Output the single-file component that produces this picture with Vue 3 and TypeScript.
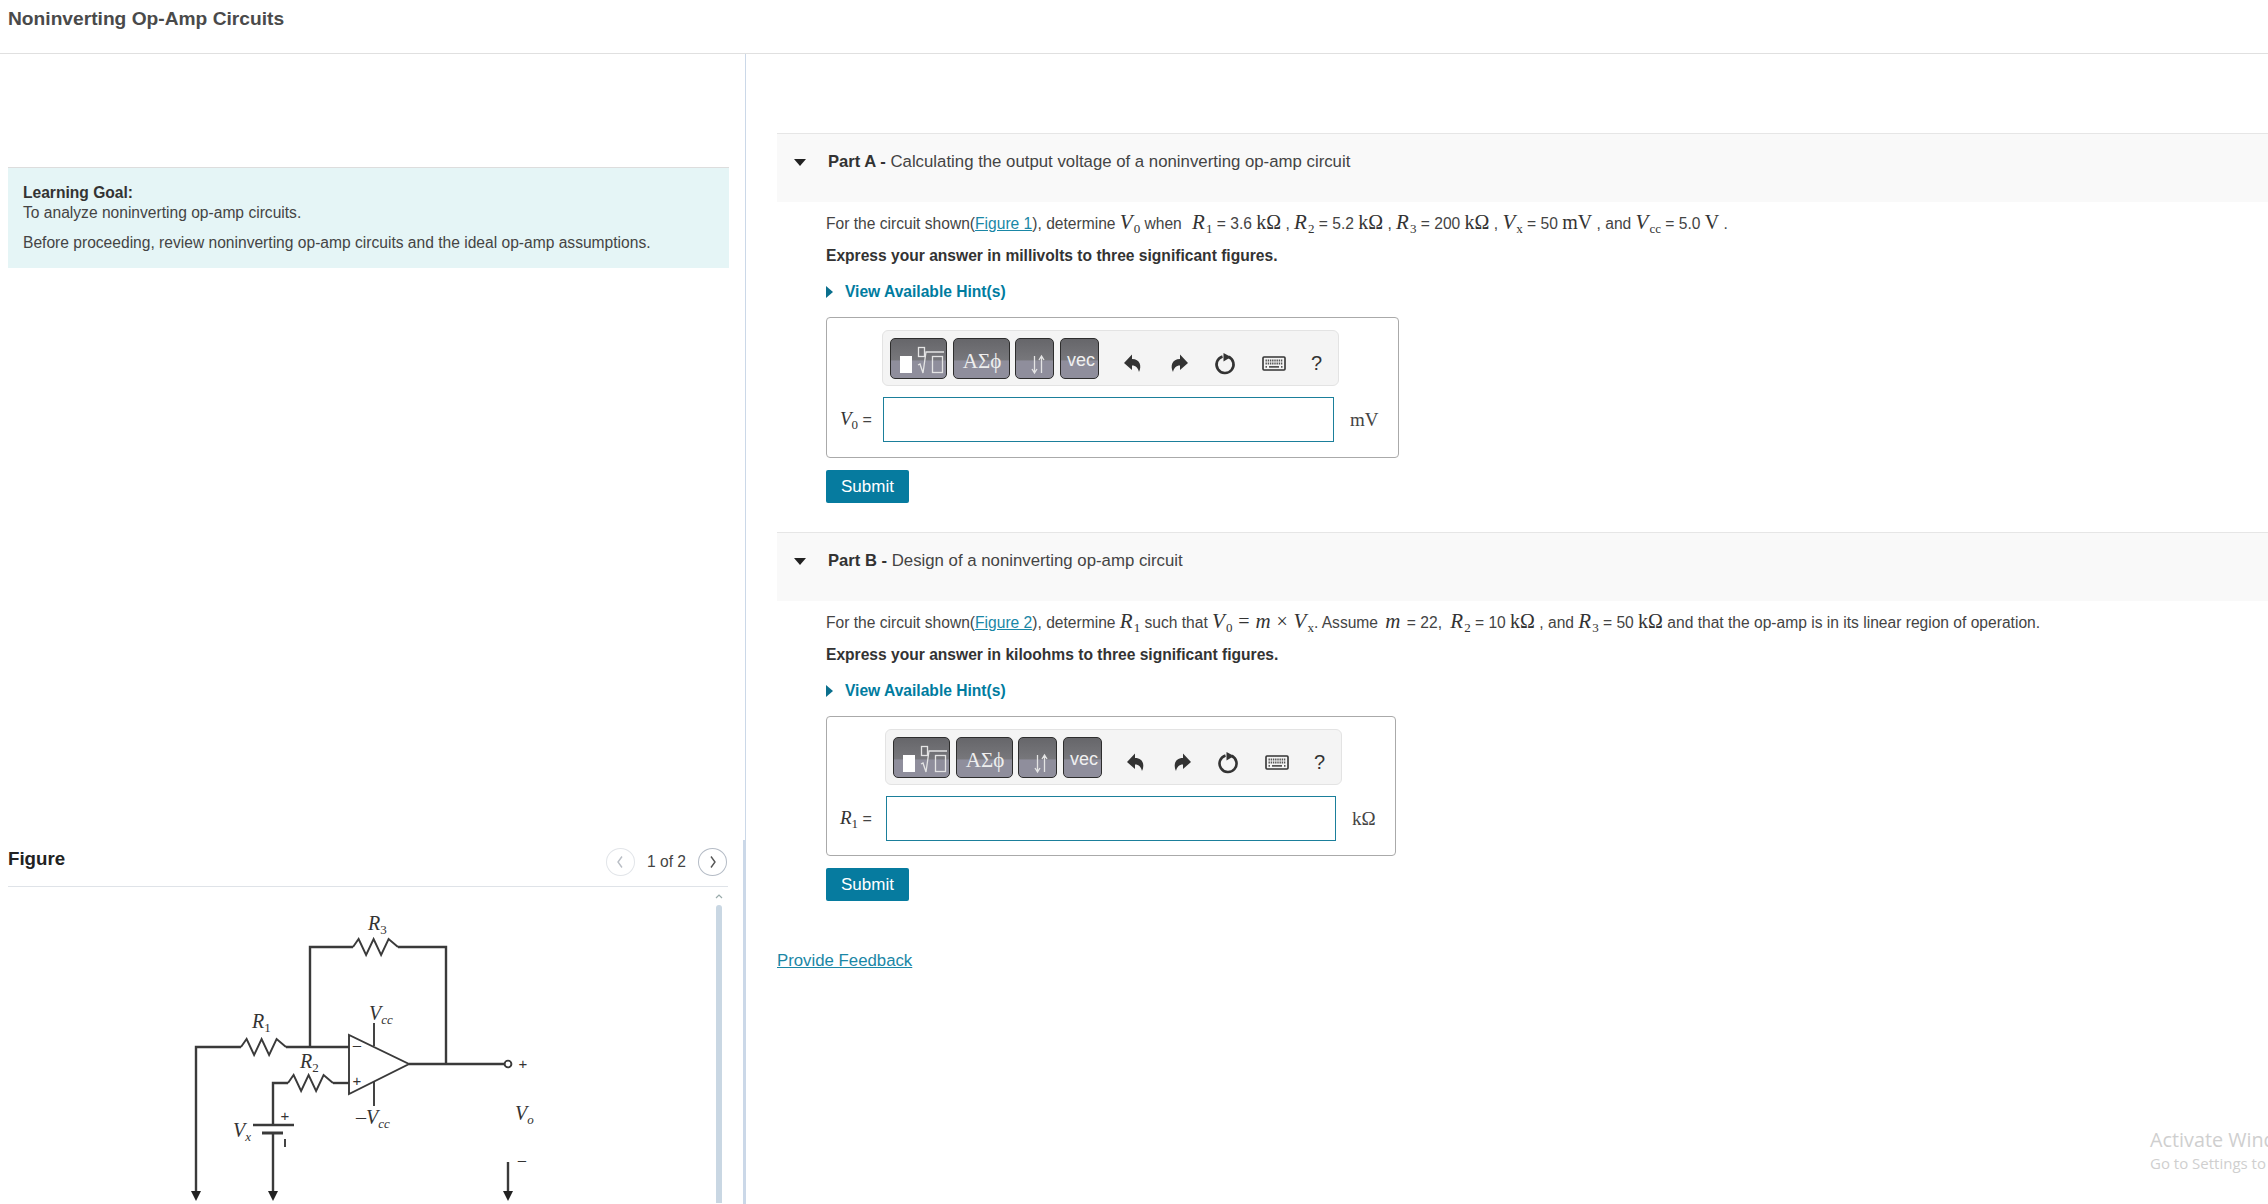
<script setup lang="ts">
interface ToolBtn { key: string; cls: string }

const toolButtons: ToolBtn[] = [
  { key: 'templates', cls: 'btn-wide' },
  { key: 'symbols', cls: 'btn-wide' },
  { key: 'arrows', cls: 'btn-narrow' },
  { key: 'vec', cls: 'btn-narrow' },
]

const parts = [
  { id: 'a', letter: 'A', title: 'Calculating the output voltage of a noninverting op-amp circuit', unit: 'mV' },
  { id: 'b', letter: 'B', title: 'Design of a noninverting op-amp circuit', unit: 'kΩ' },
]

function zig(x1: number, x2: number, y: number, amp = 8): string {
  const step = (x2 - x1) / 6
  const pts: string[] = [`${x1},${y}`]
  const offs = [-amp, amp, -amp, amp, -amp]
  offs.forEach((o, i) => pts.push(`${(x1 + step * (i + 0.75)).toFixed(1)},${y + o}`))
  pts.push(`${x2},${y}`)
  return pts.join(' ')
}

const r1 = zig(241, 286, 1048)
const r2 = zig(288, 333, 1084)
const r3 = zig(353, 398, 948)
</script>

<template>
  <div class="page">
    <header class="topbar"><h1 class="title">Noninverting Op-Amp Circuits</h1></header>
    <div class="columns">
      <aside class="left">
        <section class="goal">
          <div><strong>Learning Goal:</strong></div>
          <div>To analyze noninverting op-amp circuits.</div>
          <p class="goal-p">Before proceeding, review noninverting op-amp circuits and the ideal op-amp assumptions.</p>
        </section>
        <section class="figure">
          <div class="figure-head">
            <h2 class="figure-title">Figure</h2>
            <div class="pager">
              <span class="pg-btn pg-off"><svg viewBox="0 0 12 16" class="pg-ico"><path d="M8 2.5 4 8l4 5.5" /></svg></span>
              <span class="pg-text">1 of 2</span>
              <span class="pg-btn"><svg viewBox="0 0 12 16" class="pg-ico"><path d="M4 2.5 8 8l-4 5.5" /></svg></span>
            </div>
          </div>
          <div class="figure-body">
            <svg class="circuit" viewBox="8 888 706 316" width="706" height="316">
              <g class="wire">
                <polyline points="196,1195 196,1048 241,1048" />
                <polyline points="286,1048 349,1048" />
                <polyline points="310,1048 310,948 353,948" />
                <polyline points="398,948 446,948 446,1065" />
                <polyline points="409,1065 504,1065" />
                <polyline points="333,1084 349,1084" />
                <polyline points="288,1084 273,1084 273,1126" />
                <polyline points="273,1134 273,1195" />
                <polyline points="508,1163 508,1195" />
                <polyline points="253,1126 294,1126" />
                <polyline points="262,1134 283,1134" class="thick" />
              </g>
              <g class="thin">
                <polyline :points="r1" />
                <polyline :points="r2" />
                <polyline :points="r3" />
                <polygon points="349,1036 349,1095 409,1065" />
                <line x1="374" y1="1024" x2="374" y2="1047" />
                <line x1="374" y1="1083" x2="374" y2="1107" />
                <line x1="285" y1="1140" x2="285" y2="1148" />
                <circle cx="508" cy="1065" r="3.4" />
              </g>
              <g class="heads">
                <polygon points="191,1192 201,1192 196,1202" />
                <polygon points="268,1192 278,1192 273,1202" />
                <polygon points="503,1192 513,1192 508,1202" />
              </g>
              <g class="clabel">
                <text x="368" y="931">R<tspan class="sub1 upright" dy="4">3</tspan></text>
                <text x="252" y="1029">R<tspan class="sub1 upright" dy="4">1</tspan></text>
                <text x="300" y="1069">R<tspan class="sub1 upright" dy="4">2</tspan></text>
                <text x="369" y="1021">V<tspan class="sub1" dy="4">cc</tspan></text>
                <text x="356" y="1125">–V<tspan class="sub1" dy="4">cc</tspan></text>
                <text x="233" y="1138">V<tspan class="sub1" dy="4">x</tspan></text>
                <text x="515" y="1121">V<tspan class="sub1" dy="4">o</tspan></text>
              </g>
              <g class="csign">
                <text x="523" y="1070">+</text>
                <text x="285" y="1122">+</text>
                <text x="357" y="1087">+</text>
                <text x="357" y="1051">–</text>
                <text x="522" y="1166">–</text>
              </g>
            </svg>
            <div class="scroll">
              <svg class="scroll-up" viewBox="0 0 8 6"><path d="M1 5l3-3 3 3" /></svg>
              <div class="scroll-thumb"></div>
            </div>
          </div>
        </section>
      </aside>

      <main class="right">
        <section v-for="part in parts" :key="part.id" class="part" :class="'part-' + part.id">
          <div class="part-band">
            <span class="tri-down"></span>
            <span class="part-name"><strong>Part {{ part.letter }} -</strong> {{ part.title }}</span>
          </div>
          <div class="part-body">
            <p v-if="part.id === 'a'" class="statement">For the circuit shown(<a class="link">Figure 1</a>), determine <span class="m">V<sub>0</sub></span> when <span class="m gap">R<sub>1</sub></span> = 3.6 <span class="u">kΩ</span> , <span class="m">R<sub>2</sub></span> = 5.2 <span class="u">kΩ</span> , <span class="m">R<sub>3</sub></span> = 200 <span class="u">kΩ</span> , <span class="m">V<sub>x</sub></span> = 50 <span class="u">mV</span> , and <span class="m">V<sub>cc</sub></span> = 5.0 <span class="u">V</span> .</p>
            <p v-else class="statement">For the circuit shown(<a class="link">Figure 2</a>), determine <span class="m">R<sub>1</sub></span> such that <span class="m">V<sub>0</sub></span> <span class="u op">=</span> <span class="m">m</span> <span class="u op">×</span> <span class="m">V<sub>x</sub></span>. Assume <span class="m assume">m</span> = 22, <span class="m r2b">R<sub>2</sub></span> = 10 <span class="u">kΩ</span> , and <span class="m">R<sub>3</sub></span> = 50 <span class="u">kΩ</span> and that the op-amp is in its linear region of operation.</p>
            <p class="express">Express your answer in {{ part.id === 'a' ? 'millivolts' : 'kiloohms' }} to three significant figures.</p>
            <div class="hint"><span class="tri-right"></span><span>View Available Hint(s)</span></div>

            <div class="answer">
              <div class="toolbar">
                <span v-for="b in toolButtons" :key="b.key" class="tbtn" :class="b.cls">
                  <svg v-if="b.key === 'templates'" viewBox="0 0 57 40" class="tpl" width="57" height="40">
                    <rect x="10" y="18" width="12" height="17" fill="#fff" />
                    <rect x="28.5" y="9.5" width="6" height="9" class="hollow" />
                    <path d="M28 27l2-1 3 9 3-21h18" class="hollow" />
                    <rect x="42.5" y="18.5" width="10" height="16" class="hollow" />
                  </svg>
                  <span v-else-if="b.key === 'symbols'" class="sym">ΑΣϕ</span>
                  <svg v-else-if="b.key === 'arrows'" viewBox="0 0 39 40" class="tpl" width="39" height="40">
                    <path d="M19.5 18v17M17 31l2.5 4 2.5-4M26.5 35V18M24 22l2.5-4 2.5 4" class="hollow" />
                  </svg>
                  <span v-else class="vec">vec</span>
                </span>
                <span class="tools">
                  <svg viewBox="0 0 20 20" class="tool" width="20" height="20"><path d="M1 10l8-8.5V6c8 0 10 7 7 13-1-4-3-6.5-7-6.5V17z" /></svg>
                  <svg viewBox="0 0 20 20" class="tool" width="20" height="20"><path d="M19 10l-8-8.5V6C3 6 1 13 4 19c1-4 3-6.5 7-6.5V17z" /></svg>
                  <svg viewBox="0 0 24 24" class="tool" width="24" height="24"><path d="M15.5 5.75A8.5 8.5 0 1 1 9.5 5.4" class="ring" /><path d="M10.5 2v8.5L18 6z" /></svg>
                  <svg viewBox="0 0 24 15" class="kbd" width="24" height="15">
                    <rect x="1" y="1" width="22" height="13" rx="1" class="kbd-frame" />
                    <path d="M3.5 4.5h17M3.5 7.5h17" class="kbd-keys" />
                    <path d="M7 10.8h10M3.5 10.8h1.5M19 10.8h1.5" class="kbd-bar" />
                  </svg>
                  <span class="qm">?</span>
                </span>
              </div>
              <div class="answer-row">
                <span class="var"><span class="m" v-if="part.id === 'a'">V<sub>0</sub></span><span class="m" v-else>R<sub>1</sub></span><span class="eq"> =</span></span>
                <input class="field" type="text" />
                <span class="unit">{{ part.unit }}</span>
              </div>
            </div>
            <button class="submit" type="button">Submit</button>
          </div>
        </section>
        <a class="link feedback">Provide Feedback</a>
      </main>
    </div>
    <div class="watermark">
      <div class="wm1">Activate Windows</div>
      <div class="wm2">Go to Settings to activate Windows.</div>
    </div>
  </div>
</template>

<style>
html, body { margin: 0; background: #fff; overflow: hidden; }
</style>

<style scoped>
.page { position: relative; width: 2268px; height: 1204px; overflow: hidden; background: #fff; color: #444; font-family: "Liberation Sans", Arial, sans-serif; font-size: 15.6px; line-height: 20px; }
.topbar { height: 53px; border-bottom: 1px solid #e0e0e0; box-sizing: content-box; }
.title { margin: 0; padding: 9px 0 0 8px; font-size: 19.2px; line-height: 20px; font-weight: 700; color: #4a4a4a; }
.columns { display: flex; height: 1150px; }
.left { width: 745px; flex: none; box-sizing: border-box; padding-top: 113px; display: flex; flex-direction: column; }
.goal { margin: 0 16px 0 8px; height: 101px; box-sizing: border-box; border-top: 1px solid #ddd; background: #e5f5f6; padding: 15px 15px 0; }
.goal strong { color: #333; }
.goal-p { margin: 10px 0 0; }
.figure { margin-top: 572px; flex: 1; min-height: 0; padding-left: 8px; padding-right: 15px; border-right: 2px solid #cbd8e8; }
.figure-head { display: flex; justify-content: space-between; align-items: flex-start; height: 46px; border-bottom: 1px solid #dfe3e8; box-sizing: content-box; }
.figure-title { margin: 9px 0 0; font-size: 18.7px; line-height: 20px; font-weight: 700; color: #222; }
.pager { display: flex; align-items: center; gap: 12px; margin: 8px 1px 0 0; }
.pg-btn { width: 29px; height: 28px; border: 1px solid #b5bcc6; border-radius: 50%; display: flex; align-items: center; justify-content: center; box-sizing: border-box; }
.pg-off { border-color: #e2e5e9; }
.pg-ico { width: 12px; height: 16px; fill: none; stroke: #555; stroke-width: 1.4; }
.pg-off .pg-ico { stroke: #b9bec5; }
.pg-text { color: #444; }
.figure-body { display: flex; height: 316px; }
.circuit { flex: none; display: block; margin-left: 0; }
.wire polyline { fill: none; stroke: #3a3a3a; stroke-width: 2.4; }
.wire .thick { stroke-width: 3; }
.thin polyline, .thin polygon, .thin line, .thin circle { fill: none; stroke: #3a3a3a; stroke-width: 1.9; }
.heads polygon { fill: #222; }
.clabel text { font-family: "Liberation Serif", serif; font-style: italic; font-size: 20px; fill: #333; }
.sub1 { font-size: 13px; }
.upright { font-style: normal; }
.csign text { font-family: "Liberation Sans", sans-serif; font-size: 15px; fill: #333; text-anchor: middle; }
.scroll { width: 6px; position: relative; flex: none; margin-left: 2px; padding-top: 18px; box-sizing: border-box; }
.scroll-up { position: absolute; top: 6px; left: -1px; width: 8px; height: 6px; fill: none; stroke: #9aa; stroke-width: 1.2; }
.scroll-thumb { height: 100%; background: #c9d7e3; border-radius: 3px 3px 0 0; }

.right { flex: 1; min-width: 0; border-left: 1px solid #cbd8e8; padding: 79px 0 0 31px; }
.part-band { border-top: 1px solid #e6e6e6; background: #f9f9f9; display: flex; align-items: flex-start; position: relative; padding: 18px 0 0 51px; box-sizing: border-box; height: 69px; }
.tri-down { position: absolute; left: 17px; top: 25px; width: 0; height: 0; border-left: 6px solid transparent; border-right: 6px solid transparent; border-top: 7px solid #222; }
.part-name { color: #444; font-size: 16.8px; }
.part-name strong { color: #333; font-size: 16.6px; }
.part-body { padding: 12px 0 0 49px; }
.statement { margin: 0; color: #444; white-space: nowrap; }
.express { margin: 12px 0 0; font-weight: 700; color: #333; }
.hint { margin-top: 16px; display: flex; align-items: center; color: #007c9f; font-weight: 700; height: 20px; }
.tri-right { width: 0; height: 0; border-top: 6px solid transparent; border-bottom: 6px solid transparent; border-left: 7px solid #0a6f8d; margin-right: 12px; }
.link { color: #1a87a6; text-decoration: underline; }
.m { font-family: "Liberation Serif", serif; font-style: italic; font-size: 21px; line-height: 0; color: #333; }
.m sub { font-size: 13px; font-style: normal; line-height: 0; vertical-align: -0.3em; margin-left: 1px; }
.u { font-family: "Liberation Serif", serif; font-size: 20px; line-height: 0; color: #333; }
.op { margin: 0 1.5px; }
.assume { margin: 0 2px 0 3px; }
.r2b { margin-left: 4px; }
.gap { margin-left: 6px; }
.answer { margin-top: 15px; border: 1px solid #aaa; border-radius: 4px; box-sizing: border-box; }
.part-a .answer { width: 573px; height: 141px; }
.part-b .answer { width: 570px; height: 140px; }
.toolbar { margin: 12px 0 0 55px; width: 457px; height: 56px; box-sizing: border-box; border: 1px solid #e3e3e3; border-radius: 6px; background: #f4f4f4; display: flex; align-items: center; gap: 5.5px; padding-left: 7px; }
.part-b .toolbar { margin-left: 58px; }
.tbtn { height: 41px; box-sizing: border-box; border: 1px solid #2d2d2d; border-radius: 5px; background: linear-gradient(#66666a 0, #77777b 54%, #8f8e9c 56%, #8f8e9c 100%); display: flex; align-items: center; justify-content: center; overflow: hidden; color: #fff; }
.btn-wide { width: 57px; }
.btn-narrow { width: 39px; }
.tpl { display: block; flex: none; }
.hollow { fill: none; stroke: #e4e4e4; stroke-width: 1.3; }
.sym { font-family: "Liberation Serif", serif; font-size: 21px; color: #eee; padding: 6px 0 0 2px; }
.vec { font-size: 18px; color: #f0f0f0; padding: 3px 0 0 4px; }
.tools { display: flex; align-items: center; margin-left: 19px; position: relative; top: 5px; gap: 26px; }
.tools .tool:nth-child(3) { margin: 0 -2px; }
.tool { display: block; fill: #333; }
.ring { fill: none; stroke: #333; stroke-width: 2.6; }
.kbd { display: block; margin-left: 1px; }
.kbd-frame { fill: #f4f4f4; stroke: #333; stroke-width: 1.6; }
.kbd-keys { fill: none; stroke: #555; stroke-width: 1.8; stroke-dasharray: 1.4 0.8; }
.kbd-bar { fill: none; stroke: #555; stroke-width: 1.8; }
.qm { font-family: "Liberation Sans", sans-serif; font-size: 20px; color: #333; margin-left: -1px; }
.answer-row { display: flex; align-items: center; margin-top: 11px; }
.var { width: 56px; box-sizing: border-box; padding-left: 13px; white-space: nowrap; color: #444; }
.var .m { font-size: 19px; }
.var .m sub { margin-left: 0; }
.part-b .var { width: 59px; }
.eq { font-size: 16px; font-family: "Liberation Sans", sans-serif; }
.field { width: 451px; height: 45px; box-sizing: border-box; border: 1.5px solid #1b7f9b; background: #fff; padding: 0; outline: none; }
.part-b .field { width: 450px; }
.unit { font-family: "Liberation Serif", serif; font-size: 19px; color: #444; margin-left: 16px; }
.submit { display: block; margin-top: 12px; width: 83px; height: 33px; border: 0; border-radius: 2px; background: #067b9f; color: #fff; font-family: "Liberation Sans", sans-serif; font-size: 17px; padding: 0; }
.part-b { margin-top: 29px; }
.feedback { display: block; margin-top: 50px; width: max-content; font-size: 16.8px; }
.watermark { position: absolute; left: 2150px; top: 1126px; white-space: nowrap; color: #cfcfcf; font-family: "Open Sans", sans-serif; }
.wm1 { font-size: 19.8px; line-height: 28px; }
.wm2 { font-size: 15px; line-height: 19px; }
</style>
